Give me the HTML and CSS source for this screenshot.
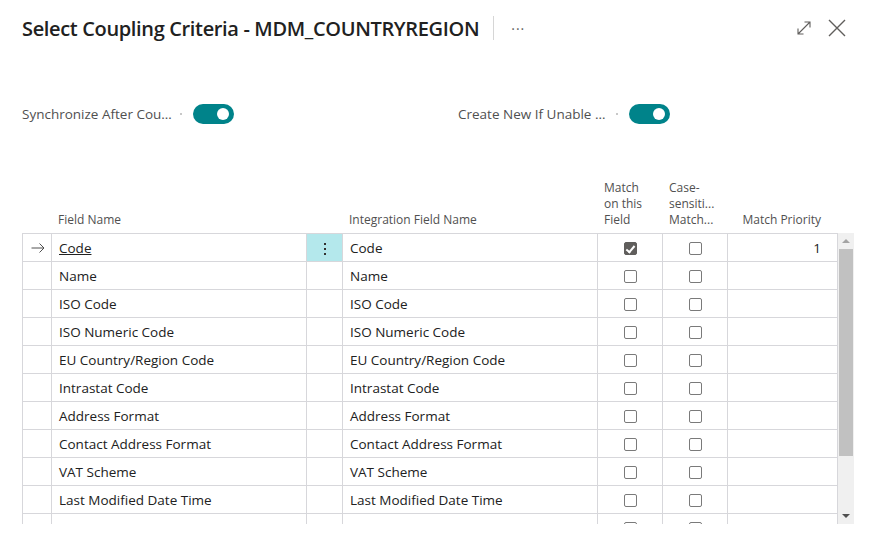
FILE: index.html
```html
<!DOCTYPE html>
<html lang="en">
<head>
    <meta charset="UTF-8">
    <meta name="viewport" content="width=device-width, initial-scale=1.0">
    <title>Select Coupling Criteria</title>
    <link rel="stylesheet" href="styles.css">
</head>
<body>
    <div class="dialog">
        <div class="dialog-header">
            <h1 class="dialog-title">Select Coupling Criteria - MDM_COUNTRYREGION</h1>
            <span class="title-sep"></span>
            <span class="more">&middot;&middot;&middot;</span>
            <div class="header-actions">
                <svg class="icon" width="18" height="18" viewBox="0 0 18 18">
                    <path d="M3 15 L15 3 M9.5 3 H15 V8.5 M3 9.5 V15 H8.5" fill="none" stroke="#605e5c" stroke-width="1.1"/>
                </svg>
                <svg class="icon" width="20" height="20" viewBox="0 0 20 20">
                    <path d="M2 2 L18 18 M18 2 L2 18" fill="none" stroke="#605e5c" stroke-width="1.4"/>
                </svg>
            </div>
        </div>

        <div class="options">
            <div class="field">
                <div class="field-label"><span class="field-text">Synchronize After Coupling</span><span class="leader"></span></div>
                <span class="toggle"><span class="knob"></span></span>
            </div>
            <div class="field">
                <div class="field-label"><span class="field-text">Create New If Unable to Find a Match</span><span class="leader"></span></div>
                <span class="toggle"><span class="knob"></span></span>
            </div>
        </div>

        <table class="grid grid-head">
            <colgroup>
                <col class="c-arrow"><col class="c-name"><col class="c-dots"><col class="c-name"><col class="c-check"><col class="c-check"><col class="c-prio">
            </colgroup>
            <tr>
                <th></th>
                <th>Field Name</th>
                <th></th>
                <th>Integration Field Name</th>
                <th>Match<br>on this<br>Field</th>
                <th>Case-<br>sensiti...<br>Match...</th>
                <th class="num">Match Priority</th>
            </tr>
        </table>

        <div class="grid-body">
            <div class="grid-scroll">
                <table class="grid rows">
                    <colgroup>
                        <col class="c-arrow"><col class="c-name"><col class="c-dots"><col class="c-name"><col class="c-check"><col class="c-check"><col class="c-prio">
                    </colgroup>
                    <tr class="current">
                        <td class="arrow">
                            <svg width="14" height="10" viewBox="0 0 14 10"><path d="M0.5 5 H13 M8.5 0.5 L13 5 L8.5 9.5" fill="none" stroke="#505050" stroke-width="1"/></svg>
                        </td>
                        <td><a class="link">Code</a></td>
                        <td class="dots"><span class="vdots"><i></i><i></i><i></i></span></td>
                        <td>Code</td>
                        <td class="center"><span class="check on"></span></td>
                        <td class="center"><span class="check"></span></td>
                        <td class="num">1</td>
                    </tr>
                    <tr><td></td><td>Name</td><td></td><td>Name</td><td class="center"><span class="check"></span></td><td class="center"><span class="check"></span></td><td></td></tr>
                    <tr><td></td><td>ISO Code</td><td></td><td>ISO Code</td><td class="center"><span class="check"></span></td><td class="center"><span class="check"></span></td><td></td></tr>
                    <tr><td></td><td>ISO Numeric Code</td><td></td><td>ISO Numeric Code</td><td class="center"><span class="check"></span></td><td class="center"><span class="check"></span></td><td></td></tr>
                    <tr><td></td><td>EU Country/Region Code</td><td></td><td>EU Country/Region Code</td><td class="center"><span class="check"></span></td><td class="center"><span class="check"></span></td><td></td></tr>
                    <tr><td></td><td>Intrastat Code</td><td></td><td>Intrastat Code</td><td class="center"><span class="check"></span></td><td class="center"><span class="check"></span></td><td></td></tr>
                    <tr><td></td><td>Address Format</td><td></td><td>Address Format</td><td class="center"><span class="check"></span></td><td class="center"><span class="check"></span></td><td></td></tr>
                    <tr><td></td><td>Contact Address Format</td><td></td><td>Contact Address Format</td><td class="center"><span class="check"></span></td><td class="center"><span class="check"></span></td><td></td></tr>
                    <tr><td></td><td>VAT Scheme</td><td></td><td>VAT Scheme</td><td class="center"><span class="check"></span></td><td class="center"><span class="check"></span></td><td></td></tr>
                    <tr><td></td><td>Last Modified Date Time</td><td></td><td>Last Modified Date Time</td><td class="center"><span class="check"></span></td><td class="center"><span class="check"></span></td><td></td></tr>
                    <tr><td></td><td>County Name</td><td></td><td>County Name</td><td class="center"><span class="check"></span></td><td class="center"><span class="check"></span></td><td></td></tr>
                </table>
            </div>
            <div class="scrollbar">
                <span class="sb-up"></span>
                <span class="sb-thumb"></span>
                <span class="sb-down"></span>
            </div>
        </div>
    </div>
</body>
</html>
```

FILE: styles.css
```css
body {
    margin: 0;
    background-color: white;
    font-family: "Open Sans", "Noto Sans", Arial, sans-serif;
    color: #212121;
}
.dialog {
    padding: 0 22px;
}
.dialog-header {
    display: flex;
    align-items: center;
    height: 56px;
}
.dialog-title {
    margin: 0;
    font-size: 20px;
    font-weight: 600;
    letter-spacing: -0.35px;
    color: #212121;
}
.title-sep {
    width: 1px;
    height: 24px;
    background-color: #d6d6d6;
    margin-left: 14px;
}
.more {
    margin-left: 17px;
    font-size: 14px;
    color: #616161;
    letter-spacing: 1px;
}
.header-actions {
    margin-left: auto;
    display: flex;
    align-items: center;
    gap: 14px;
    margin-right: 7px;
}
.icon {
    display: block;
}
.options {
    display: flex;
    margin-top: 48px;
    height: 20px;
}
.field {
    display: flex;
    align-items: center;
    width: 436px;
    flex-shrink: 0;
}
.field-label {
    display: flex;
    align-items: center;
    width: 160px;
    font-size: 13.5px;
    color: #505050;
}
.field-text {
    max-width: 150px;
    white-space: nowrap;
    overflow: hidden;
    text-overflow: ellipsis;
}
.leader {
    width: 2px;
    height: 2px;
    background-color: #c8c8c8;
    margin-left: auto;
}
.toggle {
    position: relative;
    display: inline-block;
    width: 41px;
    height: 20px;
    border-radius: 10px;
    background-color: #00838a;
    margin-left: 11px;
}
.knob {
    position: absolute;
    right: 5px;
    top: 4px;
    width: 12px;
    height: 12px;
    border-radius: 50%;
    background-color: white;
}
.grid {
    border-collapse: collapse;
    table-layout: fixed;
    width: 815px;
}
.c-arrow { width: 29px; }
.c-name { width: 255px; }
.c-dots { width: 36px; }
.c-check { width: 65px; }
.c-prio { width: 110px; }
.grid-head {
    margin-top: 56px;
}
.grid-head th {
    font-size: 12px;
    font-weight: normal;
    color: #505050;
    text-align: left;
    vertical-align: bottom;
    line-height: 16px;
    padding: 0 6px 5px 7px;
}
.grid-head th.num {
    text-align: right;
    padding-right: 16px;
}
.grid-body {
    display: flex;
    height: 291px;
    overflow: hidden;
}
.grid-scroll {
    width: 815px;
}
.rows td {
    height: 27px;
    padding: 0 6px 0 7px;
    border: 1px solid #d7d7db;
    font-size: 13.5px;
    white-space: nowrap;
    overflow: hidden;
}
.rows td.center {
    text-align: center;
    padding: 0;
}
.rows td.num {
    text-align: right;
    padding-right: 16px;
}
.rows td.arrow {
    padding: 0 0 0 8px;
}
.rows td.arrow svg {
    display: block;
}
.rows td.dots {
    background-color: #b4e8ec;
    text-align: center;
    padding: 0;
}
.vdots {
    display: inline-flex;
    flex-direction: column;
    gap: 3px;
    vertical-align: middle;
}
.vdots i {
    width: 2px;
    height: 2px;
    background-color: #323130;
}
.link {
    text-decoration: underline;
    color: #212121;
}
.check {
    display: inline-block;
    box-sizing: border-box;
    width: 13px;
    height: 13px;
    border: 1px solid #7a7a7a;
    border-radius: 2px;
    vertical-align: middle;
    position: relative;
}
.check.on {
    background-color: #605e5c;
    border-color: #605e5c;
}
.check.on::after {
    content: "";
    position: absolute;
    left: 3.5px;
    top: 0.5px;
    width: 3px;
    height: 7px;
    border: solid white;
    border-width: 0 2px 2px 0;
    transform: rotate(40deg);
}
.scrollbar {
    position: relative;
    width: 16px;
    margin-left: 1px;
    background-color: #f0f0f0;
}
.sb-up, .sb-down {
    position: absolute;
    left: 4px;
    width: 0;
    height: 0;
    border-left: 4px solid transparent;
    border-right: 4px solid transparent;
}
.sb-up {
    top: 6px;
    border-bottom: 4px solid #a3a3a3;
}
.sb-down {
    bottom: 6px;
    border-top: 4px solid #505050;
}
.sb-thumb {
    position: absolute;
    top: 16px;
    left: 1px;
    width: 14px;
    height: 207px;
    background-color: #c1c1c1;
}
```
